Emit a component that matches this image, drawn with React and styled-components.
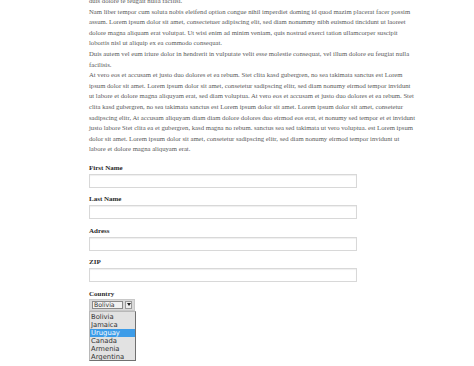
import styled, { createGlobalStyle } from "styled-components";

const GlobalStyle = createGlobalStyle`
  html, body {
    margin: 0;
    padding: 0;
    background: #fff;
  }
  body {
    font-family: "Liberation Serif", "Times New Roman", serif;
  }
`;

const paragraphs = [
  "Nam liber tempor cum soluta nobis eleifend option congue nihil imperdiet doming id quod mazim placerat facer possim assum. Lorem ipsum dolor sit amet, consectetuer adipiscing elit, sed diam nonummy nibh euismod tincidunt ut laoreet dolore magna aliquam erat volutpat. Ut wisi enim ad minim veniam, quis nostrud exerci tation ullamcorper suscipit lobortis nisl ut aliquip ex ea commodo consequat.",
  "Duis autem vel eum iriure dolor in hendrerit in vulputate velit esse molestie consequat, vel illum dolore eu feugiat nulla facilisis.",
  "At vero eos et accusam et justo duo dolores et ea rebum. Stet clita kasd gubergren, no sea takimata sanctus est Lorem ipsum dolor sit amet. Lorem ipsum dolor sit amet, consetetur sadipscing elitr, sed diam nonumy eirmod tempor invidunt ut labore et dolore magna aliquyam erat, sed diam voluptua. At vero eos et accusam et justo duo dolores et ea rebum. Stet clita kasd gubergren, no sea takimata sanctus est Lorem ipsum dolor sit amet. Lorem ipsum dolor sit amet, consetetur sadipscing elitr, At accusam aliquyam diam diam dolore dolores duo eirmod eos erat, et nonumy sed tempor et et invidunt justo labore Stet clita ea et gubergren, kasd magna no rebum. sanctus sea sed takimata ut vero voluptua. est Lorem ipsum dolor sit amet. Lorem ipsum dolor sit amet, consetetur sadipscing elitr, sed diam nonumy eirmod tempor invidunt ut labore et dolore magna aliquyam erat.",
];

const fields = ["First Name", "Last Name", "Adress", "ZIP"];
const countries = ["Bolivia", "Jamaica", "Uruguay", "Canada", "Armenia", "Argentina"];

function App() {
  return (
    <>
      <GlobalStyle />
      <Page>
        <Copy>
          <Para>duis dolore te feugait nulla facilisi.</Para>
          {paragraphs.map((text, i) => (
            <Para key={i}>{text}</Para>
          ))}
        </Copy>
        <Form>
          {fields.map((name) => (
            <Field key={name}>
              <Label>{name}</Label>
              <TextInput type="text" />
            </Field>
          ))}
          <Field>
            <Label>Country</Label>
            <SelectWrap>
              <SelectBox>
                <SelectValue>Bolivia</SelectValue>
                <SelectButton>
                  <svg width="4" height="3" viewBox="0 0 4 3">
                    <path d="M0 0h4L2 3z" fill="#222" />
                  </svg>
                </SelectButton>
              </SelectBox>
              <OptionList>
                {countries.map((c) => (
                  <Option key={c} $selected={c === "Uruguay"}>
                    {c}
                  </Option>
                ))}
              </OptionList>
            </SelectWrap>
          </Field>
        </Form>
      </Page>
    </>
  );
}

const Page = styled.div`
  width: 327px;
  padding-left: 89px;
  margin-top: -4px;
`;

const Copy = styled.div`
  font-size: 6.7px;
  line-height: 10.6px;
  color: #5a5a5a;
`;

const Para = styled.p`
  margin: 0;
`;

const Form = styled.div`
  display: flex;
  flex-direction: column;
  gap: 6.5px;
  margin-top: 8px;
`;

const Field = styled.div`
  display: flex;
  flex-direction: column;
  gap: 1px;
`;

const Label = styled.label`
  font-size: 7px;
  line-height: 10px;
  font-weight: bold;
  color: #2a2a2a;
`;

const TextInput = styled.input`
  box-sizing: border-box;
  width: 268px;
  height: 14px;
  margin: 0;
  padding: 0 2px;
  border: 1px solid #d8d8d8;
  background: #fff;
  box-shadow: inset 0 1px 1px #efefef;
  outline: none;
`;

const SelectWrap = styled.div`
  display: flex;
  flex-direction: column;
  width: 47px;
  margin-top: -1px;
  font-family: "DejaVu Sans", Verdana, sans-serif;
`;

const SelectBox = styled.div`
  box-sizing: border-box;
  width: 46px;
  height: 12px;
  display: flex;
  align-items: center;
  gap: 2px;
  padding: 1px 2px;
  background: #dadada;
  border: 1px solid #c8c8c8;
`;

const SelectValue = styled.div`
  box-sizing: border-box;
  flex: 1;
  height: 8px;
  background: #f2f2f2;
  border: 1px solid #8a8a8a;
  font-size: 6.2px;
  line-height: 6px;
  color: #333;
  padding-left: 1px;
  overflow: hidden;
`;

const SelectButton = styled.div`
  box-sizing: border-box;
  width: 7px;
  height: 8px;
  display: flex;
  align-items: center;
  justify-content: center;
  background: #eeeeee;
  border: 1px solid #9a9a9a;
`;

const OptionList = styled.div`
  box-sizing: border-box;
  width: 47px;
  height: 50px;
  padding-top: 1px;
  background: #e2e2e2;
  border: 1px solid #b8b8b8;
  border-right-color: #707070;
  border-bottom-color: #707070;
  overflow: hidden;
`;

const Option = styled.div`
  height: 8px;
  font-size: 6.8px;
  line-height: 8px;
  padding-left: 1px;
  color: ${(p) => (p.$selected ? "#fff" : "#333")};
  background: ${(p) => (p.$selected ? "#3d9ce8" : "transparent")};
`;

export default App;
